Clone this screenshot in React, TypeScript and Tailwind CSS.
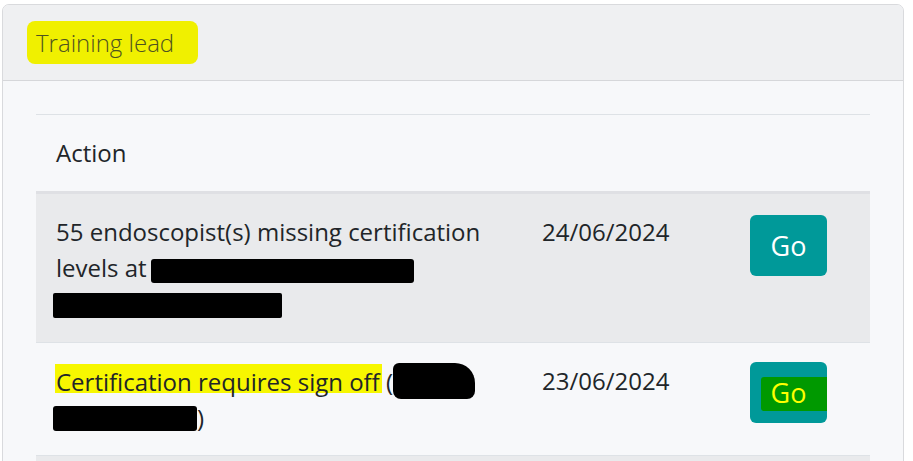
import React from "react";

const font = { fontFamily: '"Open Sans", "Noto Sans", sans-serif' };

function GoButton({ marked }: { marked?: boolean }) {
  return (
    <button className="relative w-[77px] h-[61px] rounded-[6px] bg-[#009999] text-[27px] leading-[36px] text-white flex items-center justify-center">
      {marked && <span className="absolute left-[11px] right-0 top-[15px] h-[34px] bg-[#009900] rounded-l-[3px]" />}
      <span className={marked ? "relative text-[#ffff00]" : "relative"}>Go</span>
    </button>
  );
}

export default function App() {
  return (
    <div className="w-[913px] h-[461px] overflow-hidden bg-white pt-[4px] pl-[2px] text-[#212529]" style={font}>
      <div className="w-[902px] h-[470px] border border-[#d9dadd] rounded-t-[7px] bg-[#f7f8fa] overflow-hidden">
        <div className="h-[76px] bg-[#eff0f2] border-b border-[#d6d7da] flex items-center pl-[33px]">
          <span className="relative text-[24px] leading-[33px] font-light text-[#4f5320]">
            <span className="absolute left-[-9px] right-[-24px] top-[-5px] bottom-[-5px] bg-[#f0f000] rounded-[8px]" />
            <span className="relative">Training lead</span>
          </span>
        </div>
        <div className="pt-[33px] px-[33px]">
          <table className="w-[834px] table-fixed border-collapse text-[24px] leading-[36px]">
            <colgroup>
              <col className="w-[486px]" />
              <col className="w-[208px]" />
              <col className="w-[140px]" />
            </colgroup>
            <thead>
              <tr className="border-t border-[#dee2e6]">
                <th className="text-left font-medium px-[20px] pt-[20px] pb-[20px] border-b-[3px] border-[#dfe0e4]">Action</th>
                <th className="border-b-[3px] border-[#dfe0e4]"></th>
                <th className="border-b-[3px] border-[#dfe0e4]"></th>
              </tr>
            </thead>
            <tbody>
              <tr className="bg-[#e9eaec] border-b border-[#dee2e6]">
                <td className="align-top px-[20px] pt-[20px] pb-[20px]">
                  55 endoscopist(s) missing certification
                  <br />
                  levels at{" "}
                  <span className="inline-block w-[263px] h-[24px] bg-black align-[-6px] rounded-[3px] ml-[-2px]" />
                  <br />
                  <span className="inline-block w-[229px] h-[25px] bg-black align-[-5px] rounded-[2px] ml-[-3px]" />
                </td>
                <td className="align-top px-[20px] pt-[20px]">24/06/2024</td>
                <td className="align-top px-[20px] pt-[21px]">
                  <GoButton />
                </td>
              </tr>
              <tr className="bg-[#f7f8fa] border-b border-[#dee2e6]">
                <td className="align-top px-[20px] pt-[20px] pb-[19px]">
                  <span className="relative">
                    <span className="absolute left-[-1px] right-[-2px] top-[-1px] h-[29px] bg-[#f7f700]" />
                    <span className="relative">Certification requires sign off</span>
                  </span>{" "}
                  (<span className="inline-block w-[82px] h-[36px] bg-black align-[-8px] rounded-tr-[20px] rounded-tl-[6px] rounded-b-[8px]" />
                  <br />
                  <span className="inline-block w-[144px] h-[25px] bg-black align-[-4px] rounded-[3px] ml-[-3px]" />)
                </td>
                <td className="align-top px-[20px] pt-[20px]">23/06/2024</td>
                <td className="align-top px-[20px] pt-[19px]">
                  <GoButton marked />
                </td>
              </tr>
              <tr className="bg-[#e9eaec]">
                <td className="h-[60px]"></td>
                <td></td>
                <td></td>
              </tr>
            </tbody>
          </table>
        </div>
      </div>
    </div>
  );
}
